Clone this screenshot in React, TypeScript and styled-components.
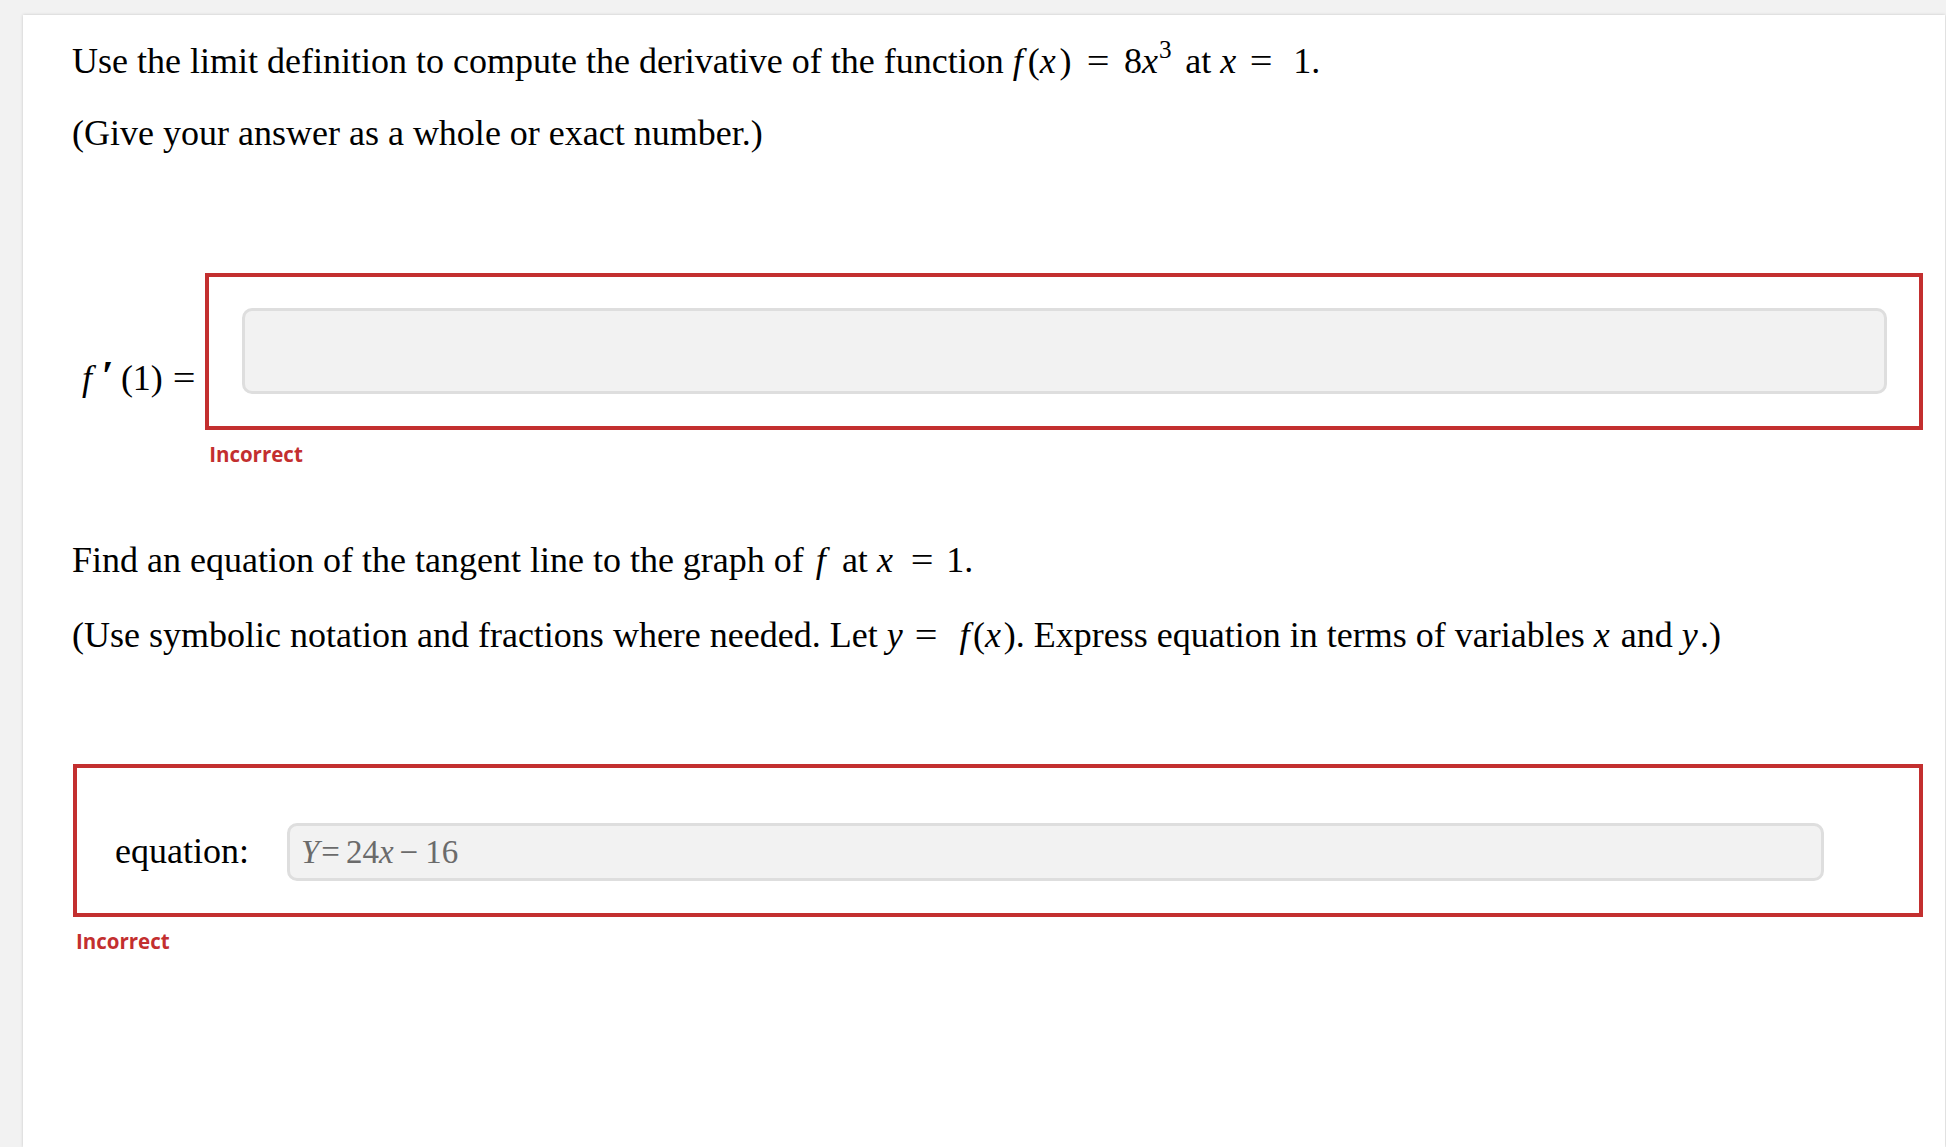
import React from 'react';
import styled, { createGlobalStyle } from 'styled-components';

const GlobalStyle = createGlobalStyle`
  html, body {
    margin: 0;
    padding: 0;
    background: #f2f2f2;
  }
  body {
    font-family: "Liberation Serif", "Times New Roman", serif;
    color: #000;
  }
`

const Page = styled.div`
  min-height: 1147px;
  padding-top: 15px;
  box-sizing: border-box;
`

const Card = styled.main`
  margin: 0 1px 0 23px;
  min-height: 1132px;
  box-sizing: border-box;
  background: #fff;
  box-shadow: 0 0 3px rgba(0, 0, 0, 0.18);
  padding: 25px 22px 0 49px;
`

const Prompt = styled.p<{ $gap?: number }>`
  margin: ${p => p.$gap ?? 0}px 0 0;
  font-size: 36px;
  line-height: 43px;
  white-space: nowrap;
`

// italic math variable; $kern adds the italic correction MathJax leaves after it
const Var = styled.i<{ $kern?: number; $lead?: number }>`
  font-style: italic;
  margin-left: ${p => p.$lead ?? 0}em;
  margin-right: ${p => p.$kern ?? 0.06}em;
`

const Rel = styled.span<{ $l?: number; $r?: number }>`
  display: inline-block;
  transform: scaleX(1.12);
  margin: 0 ${p => p.$r ?? 0.45}em 0 ${p => p.$l ?? 0.45}em;
`

const Sup = styled.sup`
  font-size: 0.7em;
  line-height: 0;
  vertical-align: 0.58em;
  margin: 0 0.18em 0 1px;
`

const Prime = styled.span`
  font-size: 1.2em;
  font-weight: 700;
  line-height: 0;
  margin: 0 0.16em 0 -0.04em;
`

const AnswerGrid = styled.div`
  display: grid;
  grid-template-columns: auto 1fr;
  column-gap: 9px;
  margin-top: 118px;
  padding-left: 10px;
`

const MathLabel = styled.div`
  align-self: end;
  margin-bottom: 30px;
  font-size: 36px;
  line-height: 43px;
  white-space: nowrap;
`

const ErrorBox = styled.div<{ $pad: string; $top?: number }>`
  margin-top: ${p => p.$top ?? 0}px;
  border: 4px solid #c32f2f;
  padding: ${p => p.$pad};
  display: flex;
  align-items: baseline;
`

const Field = styled.div<{ $h: number }>`
  flex: 1;
  height: ${p => p.$h}px;
  box-sizing: border-box;
  border: 3px solid #dedede;
  border-radius: 10px;
  background: #f2f2f2;
  padding: 0 11px;
  font-size: 33px;
  line-height: ${p => p.$h - 6}px;
  color: #6b6b6b;
  white-space: nowrap;
`

const Op = styled.span<{ $l: number; $r: number }>`
  margin: 0 ${p => p.$r}px 0 ${p => p.$l}px;
`

const Feedback = styled.div<{ $col?: number }>`
  grid-column: ${p => p.$col ?? 'auto'};
  margin: 11px 0 0 4px;
  font-family: "Open Sans", "Liberation Sans", sans-serif;
  font-weight: 700;
  font-size: 20.5px;
  line-height: 27px;
  color: #c32f2f;
`

const EquationLabel = styled.span`
  font-size: 36px;
  line-height: 43px;
  margin-right: 38px;
`

export default function App() {
  return (
    <>
      <GlobalStyle />
      <Page>
        <Card>
          <Prompt>
            Use the limit definition to compute the derivative of the function{' '}
            <Var $kern={0.14}>f</Var>(<Var $kern={0.1}>x</Var>)<Rel>=</Rel>8
            <Var $kern={0}>x</Var>
            <Sup>3</Sup> at <Var $kern={0.12}>x</Var>
            <Rel $l={0.3} $r={0.6}>=</Rel>1.
          </Prompt>
          <Prompt $gap={29}>(Give your answer as a whole or exact number.)</Prompt>

          <AnswerGrid>
            <MathLabel>
              <Var $kern={0.32}>f</Var>
              <Prime>′</Prime>(1)<Rel $l={0.3} $r={0.06}>=</Rel>
            </MathLabel>
            <ErrorBox $pad="31px 32px 32px 33px">
              <Field $h={86} />
            </ErrorBox>
            <Feedback $col={2}>Incorrect</Feedback>
          </AnswerGrid>

          <Prompt $gap={71}>
            Find an equation of the tangent line to the graph of{' '}
            <Var $lead={0.08} $kern={0.2}>f</Var> at <Var $kern={0.12}>x</Var>
            <Rel $l={0.4} $r={0.4}>=</Rel>1.
          </Prompt>
          <Prompt $gap={32}>
            (Use symbolic notation and fractions where needed. Let <Var>y</Var>
            <Rel $l={0.3} $r={0.4}>=</Rel> <Var $kern={0.1}>f</Var>(<Var $kern={0.08}>x</Var>).
            Express equation in terms of variables <Var>x</Var> and <Var>y</Var>.)
          </Prompt>

          <ErrorBox $pad="55px 95px 32px 38px" $top={107} style={{ marginLeft: 1 }}>
            <EquationLabel>equation:</EquationLabel>
            <Field $h={58}>
              <Var $kern={0}>Y</Var>
              <Op $l={2} $r={6}>=</Op>24<Var $kern={0}>x</Var>
              <Op $l={6} $r={7}>−</Op>16
            </Field>
          </ErrorBox>
          <Feedback>Incorrect</Feedback>
        </Card>
      </Page>
    </>
  );
}
